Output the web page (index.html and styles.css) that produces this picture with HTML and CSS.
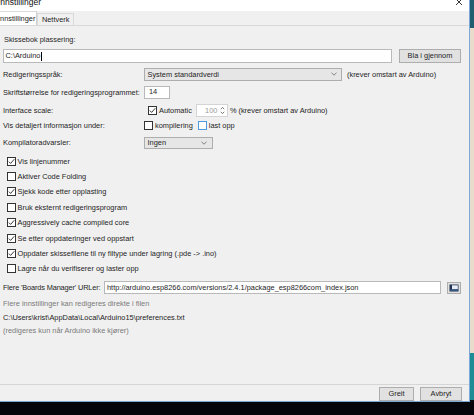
FILE: index.html
```html
<!DOCTYPE html>
<html>
<head>
<meta charset="utf-8">
<title>Innstillinger</title>
<link rel="stylesheet" href="styles.css">
</head>
<body>
<div class="screen">
  <div class="main">
    <div class="window">
      <div class="titlebar">
        <span class="title">Innstillinger</span>
        <svg class="close" width="8" height="8" viewBox="0 0 8 8"><path d="M1 0 L7 6 M7 0 L1 6" stroke="#222" stroke-width="0.9" fill="none"/></svg>
      </div>
      <div class="tabs">
        <div class="tab active">Innstillinger</div>
        <div class="tab">Nettverk</div>
      </div>
      <div class="panel">
        <div class="row r-lbl1">Skissebok plassering:</div>
        <div class="row r-path">
          <div class="input path-input">C:\Arduino<span class="caret"></span></div>
          <div class="btn browse">Bla i gjennom</div>
        </div>
        <div class="row r-lang">
          <span class="lbl">Redigeringsspråk:</span>
          <div class="select lang-select"><span>System standardverdi</span><svg width="6" height="4" viewBox="0 0 6 4"><path d="M0.5 0.8 L3 3.2 L5.5 0.8" stroke="#666" stroke-width="0.8" fill="none"/></svg></div>
          <span class="hint">(krever omstart av Arduino)</span>
        </div>
        <div class="row r-font">
          <span class="lbl">Skriftstørrelse for redigeringsprogrammet:</span>
          <div class="input font-input">14</div>
        </div>
        <div class="row r-scale">
          <span class="lbl">Interface scale:</span>
          <span class="cb cb-auto"><svg width="7" height="7" viewBox="0 0 7 7"><path d="M0.8 3.6 L2.6 5.4 L6.3 1.2" stroke="#222" stroke-width="0.9" fill="none"/></svg></span>
          <span class="cb-text">Automatic</span>
          <div class="spinner"><span class="spin-val">100</span><svg width="5" height="9" viewBox="0 0 5 9"><path d="M0.8 3.2 L2.5 1.4 L4.2 3.2 M0.8 5.8 L2.5 7.6 L4.2 5.8" stroke="#555" stroke-width="0.8" fill="none"/></svg></div>
          <span class="pct">%</span>
          <span class="hint2">(krever omstart av Arduino)</span>
        </div>
        <div class="row r-detail">
          <span class="lbl">Vis detaljert informasjon under:</span>
          <span class="cb"></span>
          <span class="cb-text">kompilering</span>
          <span class="cb cb-hover"></span>
          <span class="cb-text">last opp</span>
        </div>
        <div class="row r-warn">
          <span class="lbl">Kompilatoradvarsler:</span>
          <div class="select warn-select"><span>Ingen</span><svg width="6" height="4" viewBox="0 0 6 4"><path d="M0.5 0.8 L3 3.2 L5.5 0.8" stroke="#666" stroke-width="0.8" fill="none"/></svg></div>
        </div>
        <div class="checks">
          <div class="check"><span class="cb"><svg width="7" height="7" viewBox="0 0 7 7"><path d="M0.8 3.6 L2.6 5.4 L6.3 1.2" stroke="#222" stroke-width="0.9" fill="none"/></svg></span><span>Vis linjenummer</span></div>
          <div class="check"><span class="cb"></span><span>Aktiver Code Folding</span></div>
          <div class="check"><span class="cb"><svg width="7" height="7" viewBox="0 0 7 7"><path d="M0.8 3.6 L2.6 5.4 L6.3 1.2" stroke="#222" stroke-width="0.9" fill="none"/></svg></span><span>Sjekk kode etter opplasting</span></div>
          <div class="check"><span class="cb"></span><span>Bruk eksternt redigeringsprogram</span></div>
          <div class="check"><span class="cb"><svg width="7" height="7" viewBox="0 0 7 7"><path d="M0.8 3.6 L2.6 5.4 L6.3 1.2" stroke="#222" stroke-width="0.9" fill="none"/></svg></span><span>Aggressively cache compiled core</span></div>
          <div class="check"><span class="cb"><svg width="7" height="7" viewBox="0 0 7 7"><path d="M0.8 3.6 L2.6 5.4 L6.3 1.2" stroke="#222" stroke-width="0.9" fill="none"/></svg></span><span>Se etter oppdateringer ved oppstart</span></div>
          <div class="check"><span class="cb"><svg width="7" height="7" viewBox="0 0 7 7"><path d="M0.8 3.6 L2.6 5.4 L6.3 1.2" stroke="#222" stroke-width="0.9" fill="none"/></svg></span><span>Oppdater skissefilene til ny filtype under lagring (.pde -&gt; .ino)</span></div>
          <div class="check"><span class="cb"></span><span>Lagre når du verifiserer og laster opp</span></div>
        </div>
        <div class="row r-url">
          <span class="url-lbl">Flere 'Boards Manager' URLer:</span>
          <div class="input url-input">http://arduino.esp8266.com/versions/2.4.1/package_esp8266com_index.json</div>
          <div class="btn icon-btn"><svg width="10" height="8" viewBox="0 0 10 8"><rect x="0.5" y="0.5" width="9" height="7" fill="#1f3350"/><rect x="3" y="1.3" width="5.8" height="4" fill="#e8eef6"/><rect x="1.2" y="5.3" width="7.6" height="1.6" fill="#3a5a85"/></svg></div>
        </div>
        <div class="note grey">Flere innstillinger kan redigeres direkte i filen</div>
        <div class="note">C:\Users\krist\AppData\Local\Arduino15\preferences.txt</div>
        <div class="note grey">(redigeres kun når Arduino ikke kjører)</div>
      </div>
      <div class="footer">
        <div class="btn ok">Greit</div>
        <div class="btn cancel">Avbryt</div>
      </div>
    </div>
    <div class="desk"></div>
  </div>
  <div class="taskbar"></div>
</div>
</body>
</html>
```

FILE: styles.css
```css
html, body {
  margin: 0;
  padding: 0;
}

body {
  font-family: "Liberation Sans", Arial, sans-serif;
  font-size: 7.4px;
  color: #1e1e1e;
  background: #06060a;
}

.screen {
  width: 474px;
  height: 415px;
  display: flex;
  flex-direction: column;
  overflow: hidden;
}

.main {
  display: flex;
  height: 402px;
  flex: none;
}

.window {
  width: 470px;
  height: 402px;
  box-sizing: border-box;
  border-right: 1px solid #7ca8d8;
  border-bottom: 1px solid #7ca8d8;
  background: #f0f0f0;
  display: flex;
  flex-direction: column;
  flex: none;
  overflow: hidden;
}

.desk {
  flex: 1;
  background: linear-gradient(#1f5f70 0 28px, #e8dccd 28px 353px, #1e8c94 353px 400px, #0a0a0e 400px);
}

.taskbar {
  height: 13px;
  background: #06060a;
  flex: none;
}

/* title bar */
.titlebar {
  height: 11px;
  flex: none;
  background: #fff;
  display: flex;
  justify-content: space-between;
  align-items: flex-start;
  overflow: hidden;
}

.title {
  font-size: 8.5px;
  line-height: 8px;
  margin-top: -2px;
  margin-left: -2px;
  color: #111;
  white-space: nowrap;
}

.close {
  margin-top: -1px;
  margin-right: 6px;
}

/* tabs */
.tabs {
  height: 14px;
  flex: none;
  display: flex;
  align-items: flex-end;
  background: #f0f0f0;
}

.tab {
  height: 12px;
  box-sizing: border-box;
  border: 1px solid #d9d9d9;
  border-bottom: none;
  padding: 0 4px 0 3.5px;
  line-height: 11px;
  background: #f0f0f0;
  white-space: nowrap;
}

.tab.active {
  height: 14px;
  line-height: 13px;
  background: #fff;
  margin-left: -5px;
  padding: 0 1px 0 2px;
  border-right-color: #d0d0d0;
}

/* panel */
.panel {
  height: 360px;
  flex: none;
  box-sizing: border-box;
  border-top: 1px solid #d9d9d9;
  border-bottom: 1px solid #d6d6d6;
  padding-left: 3px;
  display: flex;
  flex-direction: column;
}

.row {
  display: flex;
  align-items: center;
  flex: none;
  white-space: nowrap;
}

.lbl {
  width: 141px;
  flex: none;
}

.r-lbl1 { margin-top: 6px; height: 14px; padding-left: 1px; }
.r-path { margin-top: 3px; height: 14px; }
.r-lang { margin-top: 4px; height: 14px; }
.r-font { margin-top: 4px; height: 14px; }
.r-scale { margin-top: 4px; height: 15px; }
.r-detail { margin-top: 1px; height: 13px; }
.r-warn { margin-top: 4px; height: 13px; }

.input {
  background: #fff;
  border: 1px solid #b9b9b9;
  box-sizing: border-box;
  height: 14px;
  line-height: 12px;
  white-space: nowrap;
  overflow: hidden;
  display: flex;
  align-items: center;
}

.btn {
  background: #e1e1e1;
  border: 1px solid #adadad;
  box-sizing: border-box;
  height: 14px;
  line-height: 12px;
  text-align: center;
  display: flex;
  align-items: center;
  justify-content: center;
}

.path-input {
  width: 389px;
  padding-left: 1.5px;
}

.caret {
  display: inline-block;
  width: 0;
  height: 9px;
  border-left: 1px solid #000;
  margin-left: 0.5px;
}

.browse {
  width: 62px;
  margin-left: 7px;
}

.select {
  background: #e6e6e6;
  border: 1px solid #adadad;
  box-sizing: border-box;
  height: 13px;
  display: flex;
  align-items: center;
  justify-content: space-between;
  padding: 0 4px 0 2.5px;
}

.lang-select { width: 198px; }
.warn-select { width: 69px; height: 12px; padding-right: 5px; }

.hint { margin-left: 5px; }

.font-input {
  width: 26px;
  height: 13px;
  padding-left: 4px;
}

.cb {
  width: 9px;
  height: 9px;
  box-sizing: border-box;
  border: 1px solid #333;
  background: #fff;
  flex: none;
  display: flex;
  align-items: center;
  justify-content: center;
}

.cb-hover { border-color: #4d9be0; margin-left: 5px; }
.cb-auto { margin-left: 4px; }
.cb-text { margin-left: 2px; }

.spinner {
  width: 32px;
  height: 13px;
  margin-left: 4px;
  box-sizing: border-box;
  border: 1px solid #d4d4d4;
  background: #fff;
  display: flex;
  align-items: center;
  justify-content: flex-end;
  padding-right: 1.5px;
}

.spin-val {
  color: #9a9a9a;
  margin-right: 3px;
}

.pct { margin-left: 2px; }
.hint2 { margin-left: 2px; }

.checks {
  margin-top: 4.5px;
  display: flex;
  flex-direction: column;
  flex: none;
}

.check {
  height: 15.4px;
  display: flex;
  align-items: center;
  padding-left: 4px;
  gap: 1.5px;
  white-space: nowrap;
}

.r-url { margin-top: 4.3px; height: 14px; }

.url-lbl {
  width: 101px;
  flex: none;
  white-space: nowrap;
  letter-spacing: -0.15px;
}

.url-input {
  width: 337px;
  height: 13px;
  padding-left: 2px;
}

.icon-btn {
  width: 14px;
  height: 12px;
  margin-left: 6px;
}

.note {
  height: 13.5px;
  line-height: 13.5px;
  flex: none;
  white-space: nowrap;
}

.r-url + .note { margin-top: 2.5px; }

.grey { color: #7a7a7a; }

/* footer */
.footer {
  height: 16px;
  flex: none;
  display: flex;
  justify-content: flex-end;
  align-items: flex-start;
  padding: 2px 7px 0 0;
  box-sizing: border-box;
  gap: 6px;
}

.ok { width: 35px; height: 13.5px; }
.cancel { width: 42px; height: 13.5px; }
```
